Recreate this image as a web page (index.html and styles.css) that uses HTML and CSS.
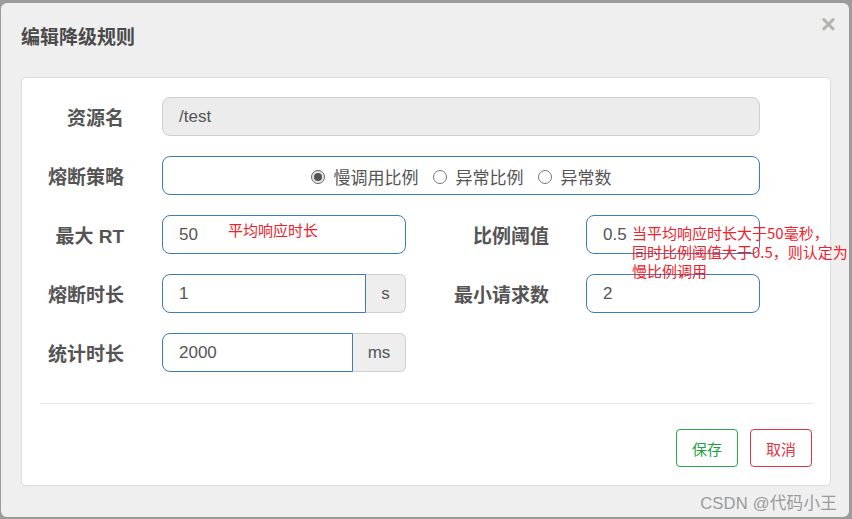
FILE: index.html
```html
<!DOCTYPE html>
<html lang="zh-CN">
<head>
<meta charset="utf-8">
<title>编辑降级规则</title>
<link rel="stylesheet" href="styles.css">
</head>
<body>
<div class="dialog">
  <div class="header">
    <h4 class="title">编辑降级规则</h4>
    <span class="close">×</span>
  </div>
  <div class="panel">
    <div class="form">
      <div class="lbl">资源名</div>
      <div class="ctl disabled span3">/test</div>

      <div class="lbl">熔断策略</div>
      <div class="ctl radios span3">
        <span class="radio"><span class="dot on"></span>慢调用比例</span>
        <span class="radio"><span class="dot"></span>异常比例</span>
        <span class="radio"><span class="dot"></span>异常数</span>
      </div>

      <div class="lbl">最大 RT</div>
      <div class="ctl note-host">50<span class="note note-rt">平均响应时长</span></div>
      <div class="lbl lbl-r">比例阈值</div>
      <div class="ctl note-host">0.5<span class="note note-ratio">当平均响应时长大于50毫秒，<br>同时比例阈值大于0.5，则认定为<br>慢比例调用</span></div>

      <div class="lbl">熔断时长</div>
      <div class="group">
        <div class="ctl gl">1</div>
        <div class="addon addon-s">s</div>
      </div>
      <div class="lbl lbl-r">最小请求数</div>
      <div class="ctl">2</div>

      <div class="lbl">统计时长</div>
      <div class="group">
        <div class="ctl gl">2000</div>
        <div class="addon addon-ms">ms</div>
      </div>
    </div>
    <div class="divider"></div>
    <div class="footer">
      <button class="btn btn-save">保存</button>
      <button class="btn btn-cancel">取消</button>
    </div>
  </div>
  <div class="watermark">CSDN @代码小王</div>
</div>
</body>
</html>
```

FILE: styles.css
```css
html, body {
  margin: 0;
  padding: 0;
}
body {
  background: #9b9b9b;
  width: 852px;
  height: 519px;
  overflow: hidden;
  font-family: "Liberation Sans", "Noto Sans CJK SC", sans-serif;
}
.dialog {
  position: relative;
  box-sizing: border-box;
  margin: 3px 3px 0 1px;
  width: 848px;
  height: 514px;
  background: #efefef;
  border-radius: 6px;
  padding: 0 18px 0 20px;
}
.header {
  display: flex;
  justify-content: space-between;
  align-items: flex-start;
  height: 74px;
}
.title {
  margin: 21px 0 0 0;
  font-size: 19px;
  line-height: 28px;
  font-weight: bold;
  color: #4a4a4a;
}
.close {
  margin-top: 8px;
  margin-right: -5px;
  font-size: 26px;
  line-height: 26px;
  font-weight: bold;
  color: #b3b3b3;
}
.panel {
  box-sizing: border-box;
  height: 409px;
  background: #fff;
  border: 1px solid #dcdcdc;
  border-radius: 5px;
  padding-top: 19px;
}
.form {
  display: grid;
  grid-template-columns: 140px 244px 180px 174px;
  grid-auto-rows: 39px;
  row-gap: 20px;
}
.lbl {
  box-sizing: border-box;
  padding-right: 38px;
  text-align: right;
  font-size: 19px;
  font-weight: bold;
  color: #555;
  display: flex;
  align-items: center;
  justify-content: flex-end;
}
.lbl-r {
  padding-right: 37px;
}
.span3 {
  grid-column: span 3;
}
.ctl {
  box-sizing: border-box;
  border: 1px solid #3a7db9;
  border-radius: 8px;
  padding: 0 16px;
  font-size: 17px;
  color: #555;
  display: flex;
  align-items: center;
  background: #fff;
}
.ctl.disabled {
  background: #ececec;
  border-color: #cfcfcf;
}
.radios {
  justify-content: center;
  gap: 14px;
  padding-top: 2px;
}
.radio {
  display: inline-flex;
  align-items: center;
  gap: 9px;
  font-family: "Noto Sans CJK SC", sans-serif;
  font-size: 17px;
  color: #555;
}
.dot {
  box-sizing: border-box;
  width: 14px;
  height: 14px;
  border-radius: 50%;
  border: 1px solid #777;
  display: inline-flex;
  align-items: center;
  justify-content: center;
  background: #fff;
}
.dot.on {
  border-color: #666;
  background: #e6e6e6;
}
.dot.on::after {
  content: "";
  width: 8px;
  height: 8px;
  border-radius: 50%;
  background: #555;
}
.note-host {
  position: relative;
}
.note {
  position: absolute;
  font-family: "Noto Sans CJK SC", sans-serif;
  font-size: 15px;
  color: #f0212b;
  white-space: nowrap;
}
.note-rt {
  left: 65px;
  top: 4px;
  line-height: 20px;
}
.note-ratio {
  left: 45px;
  top: 7px;
  line-height: 19px;
}
.group {
  display: flex;
}
.ctl.gl {
  flex: 1;
  border-radius: 8px 0 0 8px;
}
.addon {
  box-sizing: border-box;
  background: #eee;
  border: 1px solid #cfcfcf;
  border-left: none;
  border-radius: 0 6px 6px 0;
  color: #555;
  font-size: 17px;
  display: flex;
  align-items: center;
  justify-content: center;
}
.addon-s {
  width: 40px;
}
.addon-ms {
  width: 53px;
}
.divider {
  margin: 31px 18px 0 18px;
  border-top: 1px solid #e5e5e5;
}
.footer {
  display: flex;
  justify-content: flex-end;
  gap: 12px;
  margin-top: 25px;
  padding-right: 18px;
}
.btn {
  box-sizing: border-box;
  width: 62px;
  height: 38px;
  background: #fff;
  border-radius: 4px;
  font-family: "Noto Sans CJK SC", sans-serif;
  font-size: 15px;
  padding: 0;
}
.btn-save {
  border: 1px solid #2aa84a;
  color: #22a043;
}
.btn-cancel {
  border: 1px solid #dc3545;
  color: #dc3545;
}
.watermark {
  position: absolute;
  right: 12px;
  bottom: 3px;
  font-size: 16.6px;
  color: #9a9a9a;
  letter-spacing: 0.2px;
}
```
